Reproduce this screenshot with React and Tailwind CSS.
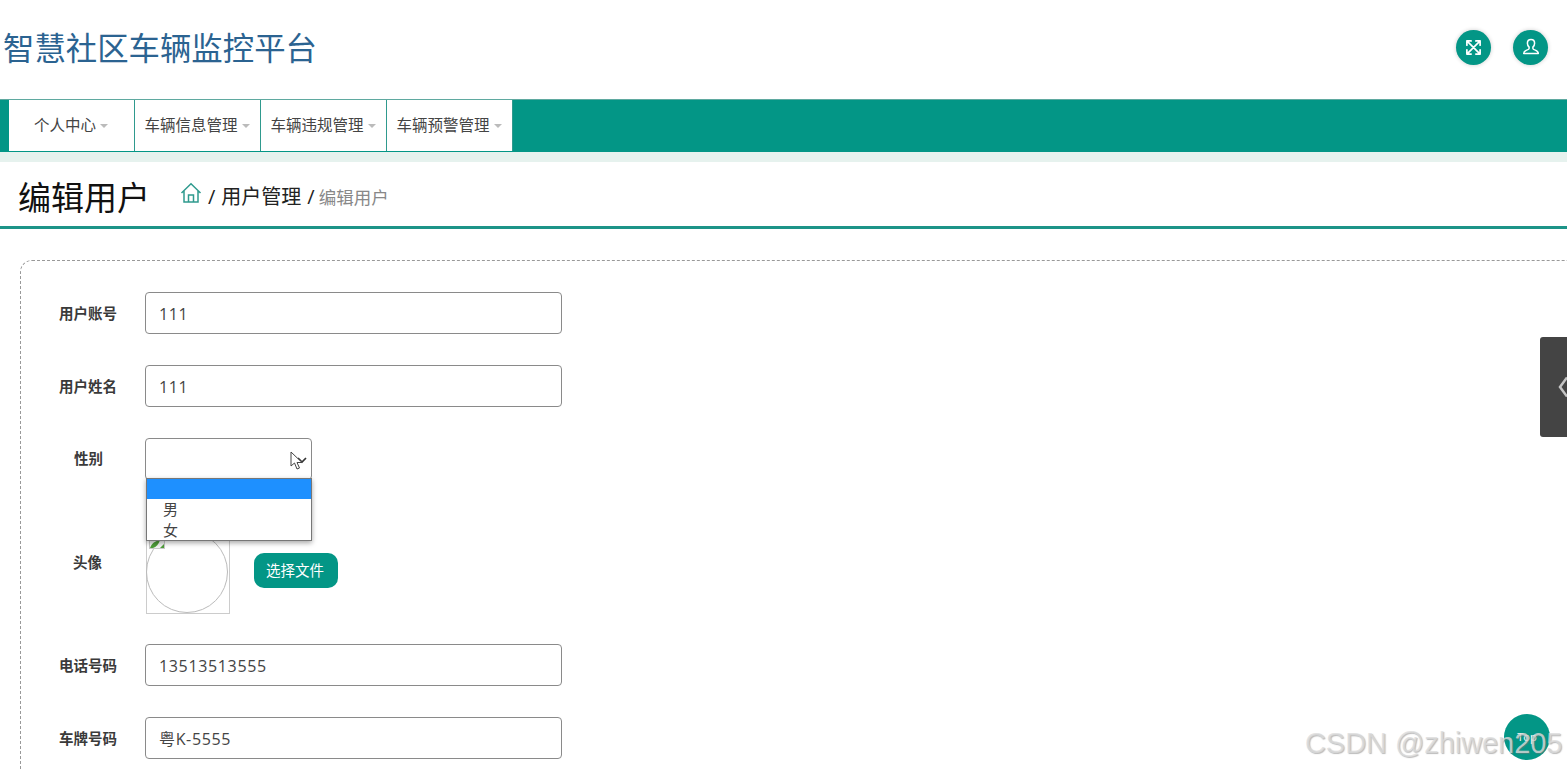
import React from "react";

const FONT = "font-['Open_Sans','Noto_Sans_CJK_SC',sans-serif]";

function NavItem({ label }) {
  return (
    <div className="h-[51px] w-[126px] bg-white border-r border-[#2f9a8e] flex items-center justify-center text-[15.5px] text-[#444] pr-[1px] pt-[1px]">
      <span>{label}</span>
      <span className="ml-[4px] mt-[-1px] w-0 h-0 border-x-[4.5px] border-x-transparent border-t-[4px] border-t-[#bbb]" />
    </div>
  );
}

function Field({ label, value }) {
  return (
    <div className="flex items-center h-[42px]">
      <label className="w-[124px] pl-[38px] mt-[1px] text-[14.5px] font-bold text-[#3a3a3a]">{label}</label>
      <div className="w-[417px] h-[42px] border border-[#8a8a8a] rounded-[4px] pl-[13px] pt-[1px] flex items-center text-[16px] text-[#444] tracking-[0.65px]">{value}</div>
    </div>
  );
}

export default function App() {
  return (
    <div className={`relative w-[1567px] h-[771px] overflow-hidden bg-white ${FONT}`}>
      <header className="h-[99px] flex items-center justify-between pl-[3px] pr-[19px]">
        <h1 className="text-[31.4px] font-normal text-[#2b6391] mt-[-3px]">智慧社区车辆监控平台</h1>
        <div className="flex items-center gap-[22px] mt-[-5px]">
          <div className="w-[35px] h-[35px] rounded-full bg-[#039686] flex items-center justify-center shadow-[0_0_4px_rgba(0,0,0,0.2)]">
            <svg width="17" height="17" viewBox="0 0 18 18" fill="none" stroke="#fff" strokeWidth="1.8" strokeLinecap="round" strokeLinejoin="round">
              <path d="M2 2l14 14M16 2L2 16M2 6.500V2h4.500M11.500 2H16v4.500M2 11.500V16h4.500M16 11.500V16h-4.500" />
            </svg>
          </div>
          <div className="w-[35px] h-[35px] rounded-full bg-[#039686] flex items-center justify-center shadow-[0_0_4px_rgba(0,0,0,0.2)]">
            <svg width="18" height="18" viewBox="0 0 18 18" fill="none" stroke="#fff" strokeWidth="1.5" strokeLinecap="round" strokeLinejoin="round">
              <path d="M9 1.500c-2.200 0-3.600 1.600-3.600 3.700 0 1.700.8 3 1.700 3.900v1.300c0 .8-1 1.200-2.400 1.700-1.600.6-3 1.300-3 3.400h14.600c0-2.100-1.400-2.800-3-3.400-1.400-.5-2.400-.9-2.400-1.700V9.100c.9-.9 1.700-2.200 1.700-3.900 0-2.100-1.400-3.700-3.600-3.700z" />
            </svg>
          </div>
        </div>
      </header>

      <nav className="h-[53px] bg-[#039686] pl-[9px] border-t border-[#5fa9a0] flex items-start">
        <NavItem label="个人中心" />
        <NavItem label="车辆信息管理" />
        <NavItem label="车辆违规管理" />
        <NavItem label="车辆预警管理" />
      </nav>
      <div className="h-[10px] bg-[#e6f2ee]" />

      <div className="h-[67px] border-b-[3px] border-[#1d9488] flex items-center pl-[19px]">
        <h2 className="text-[33px] font-normal text-[#111] w-[161px] leading-none mt-[6px] ml-[-1px] mr-[1px]">编辑用户</h2>
        <svg className="mt-[-2px] shrink-0" width="22" height="22" viewBox="0 0 22 22" fill="none" stroke="#2f9a8e" strokeWidth="1.500">
          <path d="M1.500 11L11 1.800 20.500 11M4 9v11h14V9M8.500 20v-7h5v7" />
        </svg>
        <div className="flex items-center ml-[6px] mt-[6px] text-[#222] text-[20px]">
          <span>/</span>
          <span className="ml-[6px]">用户管理</span>
          <span className="ml-[6px]">/</span>
          <span className="ml-[4px] text-[17.5px] text-[#888]">编辑用户</span>
        </div>
      </div>

      <main className="mt-[31px] ml-[20px] w-[1600px] h-[600px] border border-dashed border-[#999] rounded-tl-[12px] pt-[31px]">
        <Field label="用户账号" value="111" />
        <div className="mt-[31px]"><Field label="用户姓名" value="111" /></div>

        <div className="relative mt-[31px] flex items-center h-[42px]">
          <label className="w-[124px] pl-[53px] text-[14.5px] font-bold text-[#3a3a3a]">性别</label>
          <div className="relative w-[167px] h-[42px] border border-[#8a8a8a] rounded-[4px]">
            <svg className="absolute right-[4px] top-[18px]" width="10" height="7" viewBox="0 0 10 7" fill="none" stroke="#333" strokeWidth="1.700">
              <path d="M1 1l4 4 4-4" />
            </svg>
            <svg className="absolute left-[144px] top-[12px]" width="15" height="20" viewBox="0 0 15 20" fill="#fff" stroke="#444" strokeWidth="1">
              <path d="M1 1v14l3.500-3 2.500 6 2.500-1-2.500-5.500h5z" />
            </svg>
          </div>
          <div className="absolute left-[125px] top-[40px] z-10 w-[166px] h-[63px] bg-white border border-[#777] shadow-[0_2px_5px_rgba(0,0,0,0.35)] text-[15px] text-[#444] leading-[21px]">
            <div className="h-[20px] bg-[#1e90ff]" />
            <div className="pl-[16px]">男</div>
            <div className="pl-[16px] mt-[-0.5px]">女</div>
          </div>
        </div>

        <div className="relative mt-[50px] flex items-start h-[84px]">
          <label className="w-[124px] pl-[52px] pt-[22px] text-[14.5px] font-bold text-[#3a3a3a]">头像</label>
          <div className="relative w-[84px] h-[84px] border border-[#ccc] ml-[1px]">
            <div className="w-full h-full rounded-full border border-[#bbb] ml-[-1px]" />
            <svg className="absolute left-[2px] top-[2px]" width="16" height="16" viewBox="0 0 16 16">
              <rect width="16" height="16" fill="#c9c9c9" />
              <rect x="1" y="1" width="14" height="14" fill="#f4f4f4" />
              <path d="M1 15c2-5 5-7 10-8-1 4-4 7-7 8z" fill="#4f9e3a" />
              <path d="M11 15l4-4v4z" fill="#4f9e3a" />
            </svg>
          </div>
          <button className="ml-[24px] mt-[23px] w-[84px] h-[35px] rounded-[10px] bg-[#039686] text-white text-[14.5px] pr-[2px]">选择文件</button>
        </div>

        <div className="mt-[30px]"><Field label="电话号码" value="13513513555" /></div>
        <div className="mt-[31px]"><Field label="车牌号码" value="粤K-5555" /></div>
      </main>

      <div className="absolute left-[1540px] top-[337px] w-[27px] h-[100px] bg-[#444] rounded-l-[3px] overflow-hidden">
        <svg className="absolute left-[18px] top-[39px]" width="9" height="22" viewBox="0 0 9 22" fill="none" stroke="#c4c4c4" strokeWidth="2.500">
          <path d="M9 1.500L2 11l7 9.500" />
        </svg>
      </div>

      <div className="absolute left-[1504px] top-[714px] w-[46px] h-[46px] rounded-full bg-[#039686] flex items-center justify-center text-white text-[11px]">Top</div>

      <div className="absolute left-[1305px] top-[725px] font-['Liberation_Sans',sans-serif] text-[28.9px] leading-[36px] whitespace-nowrap text-[#dcdcdc]/80 [text-shadow:1px_1px_1px_rgba(120,120,120,0.5)]">
        CSDN @zhiwen205
      </div>
    </div>
  );
}
